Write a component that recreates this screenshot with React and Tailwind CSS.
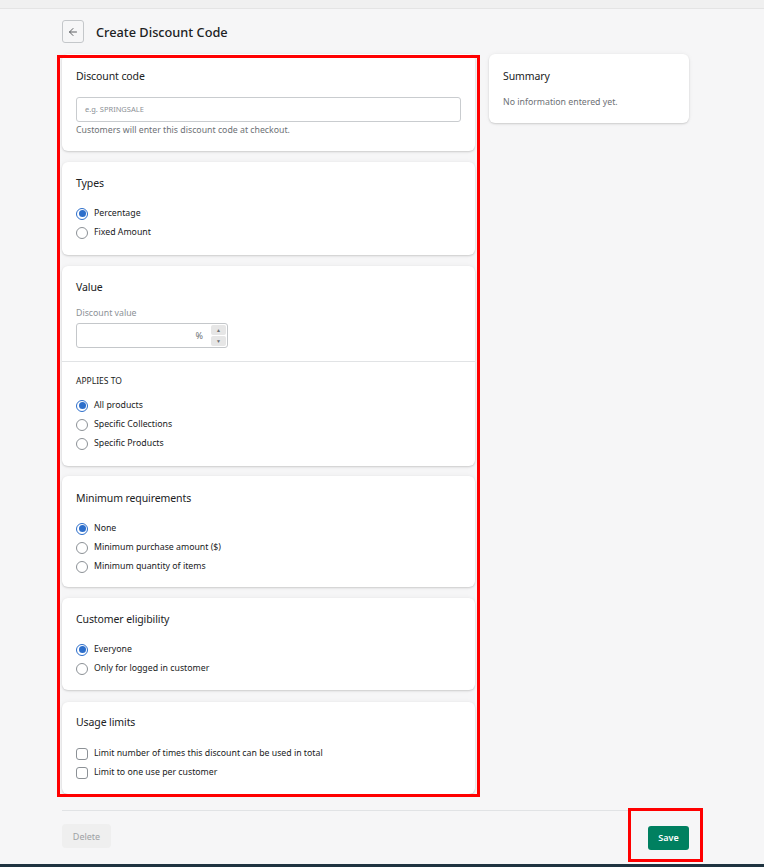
import React from "react";
import { ArrowLeft } from "lucide-react";

const font = { fontFamily: '"Noto Sans", "Open Sans", sans-serif' };

function Radio({ checked, label }) {
  return (
    <label className="flex h-[19px] items-center gap-[6px]">
      {checked ? (
        <span className="flex h-[12px] w-[12px] items-center justify-center rounded-full border border-[#2c6ecb] bg-white">
          <span className="h-[7px] w-[7px] rounded-full bg-[#2c6ecb]" />
        </span>
      ) : (
        <span className="h-[12px] w-[12px] rounded-full border border-[#8c9196] bg-white" />
      )}
      <span className="text-[8.75px] leading-[13px] text-[#202223]">{label}</span>
    </label>
  );
}

function Check({ label }) {
  return (
    <label className="flex h-[19px] items-center gap-[6px]">
      <span className="h-[12px] w-[12px] rounded-[3px] border border-[#8c9196] bg-white" />
      <span className="text-[8.75px] leading-[13px] text-[#202223]">{label}</span>
    </label>
  );
}

function Card({ children, className = "" }) {
  return (
    <div
      className={
        "rounded-[6px] bg-white shadow-[0_0_5px_rgba(23,24,24,0.05),0_1px_2px_rgba(0,0,0,0.15)] " +
        className
      }
    >
      {children}
    </div>
  );
}

function Heading({ children }) {
  return <h2 className="text-[10.5px] leading-[16px] tracking-[-0.1px] text-[#202223]">{children}</h2>;
}

export default function App() {
  return (
    <div className="flex h-[867px] w-full flex-col overflow-hidden bg-[#f6f6f7]" style={font}>
      <div className="h-[9px] shrink-0 border-b border-[#e4e4e4] bg-[#f0f0f0]" />
      <div className="ml-[62px] flex w-[627px] flex-1 flex-col">
        <div className="mt-[11px] flex items-center gap-[12px]">
          <button className="flex h-[23px] w-[22px] items-center justify-center rounded-[3px] border border-[#c4c7ca] bg-transparent text-[#5c5f62]">
            <ArrowLeft size={12} strokeWidth={2} />
          </button>
          <h1 className="text-[12.75px] font-medium leading-[20px] text-[#202223]">Create Discount Code</h1>
        </div>

        <div className="mt-[11px] flex items-start gap-[14px]">
          <div className="relative flex w-[413px] flex-col">
            <Card className="px-[14px] pb-[14px] pt-[14px]">
              <Heading>Discount code</Heading>
              <div className="mt-[13px] flex h-[25px] items-center rounded-[3px] border border-[#c9cccf] px-[8px]">
                <span className="text-[7.5px] text-[#8c9196]">e.g. SPRINGSALE</span>
              </div>
              <p className="mt-[2px] text-[8.75px] leading-[13px] text-[#6d7175]">
                Customers will enter this discount code at checkout.
              </p>
            </Card>

            <Card className="mt-[11px] px-[14px] pb-[13px] pt-[13px]">
              <Heading>Types</Heading>
              <div className="mt-[13px] flex flex-col">
                <Radio checked label="Percentage" />
                <Radio label="Fixed Amount" />
              </div>
            </Card>

            <Card className="mt-[11px]">
              <div className="px-[14px] pb-[13px] pt-[13px]">
                <Heading>Value</Heading>
                <p className="mt-[12px] text-[8.75px] leading-[13px] text-[#8c9196]">Discount value</p>
                <div className="mt-[3px] flex h-[25px] w-[152px] items-center justify-end gap-[8px] rounded-[3px] border border-[#c4c7ca] pr-[1px]">
                  <span className="text-[9px] text-[#6d7175]">%</span>
                  <div className="flex flex-col gap-[1px]">
                    <span className="flex h-[10px] w-[15px] items-center justify-center rounded-[2px] bg-[#e6e6e6] text-[5px] leading-none text-[#6d7175]">▲</span>
                    <span className="flex h-[10px] w-[15px] items-center justify-center rounded-[2px] bg-[#e6e6e6] text-[5px] leading-none text-[#6d7175]">▼</span>
                  </div>
                </div>
              </div>
              <div className="border-t border-[#e1e3e5] px-[14px] pb-[13px] pt-[12px]">
                <p className="text-[8.5px] uppercase leading-[13px] text-[#202223]">Applies to</p>
                <div className="mt-[9px] flex flex-col">
                  <Radio checked label="All products" />
                  <Radio label="Specific Collections" />
                  <Radio label="Specific Products" />
                </div>
              </div>
            </Card>

            <Card className="mt-[10px] px-[14px] pb-[11px] pt-[14px]">
              <Heading>Minimum requirements</Heading>
              <div className="mt-[13px] flex flex-col">
                <Radio checked label="None" />
                <Radio label="Minimum purchase amount ($)" />
                <Radio label="Minimum quantity of items" />
              </div>
            </Card>

            <Card className="mt-[11px] px-[14px] pb-[12px] pt-[13px]">
              <Heading>Customer eligibility</Heading>
              <div className="mt-[13px] flex flex-col">
                <Radio checked label="Everyone" />
                <Radio label="Only for logged in customer" />
              </div>
            </Card>

            <Card className="mt-[12px] h-[92px] px-[14px] pt-[12px]">
              <Heading>Usage limits</Heading>
              <div className="mt-[14px] flex flex-col">
                <Check label="Limit number of times this discount can be used in total" />
                <Check label="Limit to one use per customer" />
              </div>
            </Card>

            <div className="pointer-events-none absolute -bottom-[3px] -left-[5px] -right-[5px] top-[1px] border-[3px] border-[#ff0000]" />
          </div>

          <Card className="w-[200px] px-[14px] pb-[14px] pt-[14px]">
            <Heading>Summary</Heading>
            <p className="mt-[12px] text-[8.75px] leading-[13px] text-[#6d7175]">No information entered yet.</p>
          </Card>
        </div>

        <div className="mt-[16px] flex items-center justify-between border-t border-[#e1e3e5] pt-[12px]">
          <button className="h-[24px] w-[49px] rounded-[4px] bg-[#efefef] text-[9px] text-[#9ea1a4]">Delete</button>
          <div className="relative">
            <button className="h-[24px] w-[41px] rounded-[3px] bg-[#008060] text-[9px] font-semibold text-white">Save</button>
            <div className="pointer-events-none absolute -bottom-[12px] -left-[20px] -right-[14px] -top-[15px] border-[3px] border-[#ff0000]" />
          </div>
        </div>
      </div>
      <div className="h-[3px] shrink-0 bg-[#1f3340]" />
    </div>
  );
}
